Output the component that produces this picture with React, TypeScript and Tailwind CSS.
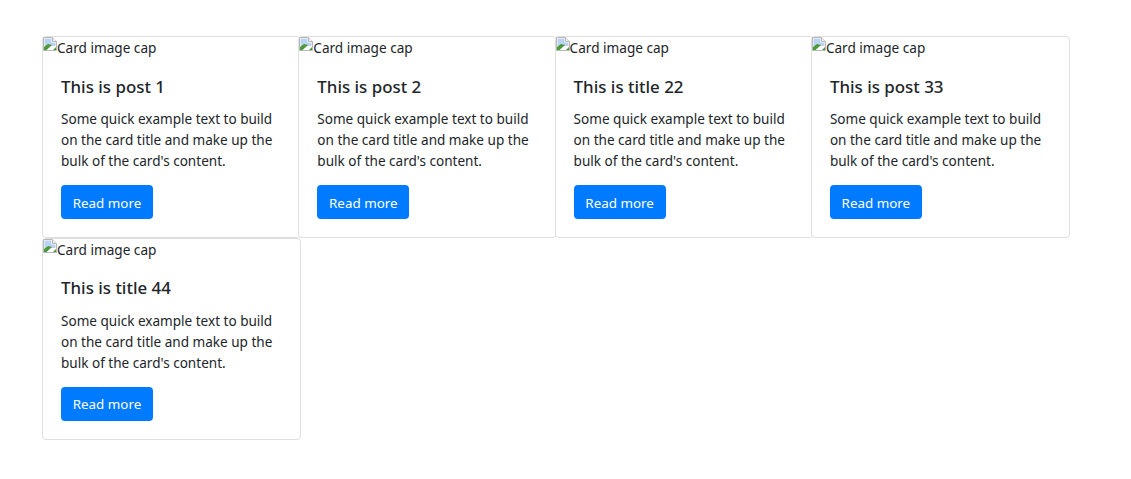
const posts = ["This is post 1", "This is post 2", "This is title 22", "This is post 33", "This is title 44"];

function BrokenImage() {
  return (
    <svg width="14" height="14" viewBox="0 0 14 14" className="shrink-0">
      <path d="M0.5 0.5H9.5L13.5 4.5V13.5H0.5Z" fill="#fff" stroke="#b8b8b8" />
      <path d="M9.5 0.5V4.5H13.5" fill="#f0f0f0" stroke="#b8b8b8" />
      <path d="M1.5 1.5H8.5V5.5H12.5V9H1.5Z" fill="#bcd2f2" />
      <path d="M1 13V10L5 7L9 8L3.5 13Z" fill="#4a9a3a" />
      <path d="M10 13L13 10V13Z" fill="#4a9a3a" />
    </svg>
  );
}

function Card({ title }: { title: string }) {
  return (
    <div className="w-[259px] h-[202px] bg-white border border-[#dfdfdf] rounded-[4px]">
      <div className="flex items-start h-[21px] text-[13.6px] leading-[22px] text-[#212529]">
        <BrokenImage />
        <span>Card image cap</span>
      </div>
      <div className="px-[18px] pt-[17.4px]">
        <h5 className="text-[16.9px] leading-[22px] font-medium text-[#212529] mb-[11.6px]">{title}</h5>
        <p className="text-[13.55px] leading-[21px] text-[#212529] mb-[13px]">
          Some quick example text to build on the card title and make up the bulk of the card's content.
        </p>
        <button className="block bg-[#007bff] text-white text-[13.4px] leading-[21px] rounded-[4px] w-[92px] h-[34px] pt-[2px]">
          Read more
        </button>
      </div>
    </div>
  );
}

export default function App() {
  return (
    <div className="bg-white min-h-[479px] pl-[42px] pt-[36.4px] font-['Noto_Sans','Open_Sans',sans-serif]">
      <div className="grid grid-cols-[repeat(4,256.3px)] auto-rows-[201.6px]">
        {posts.map((t) => (
          <Card key={t} title={t} />
        ))}
      </div>
    </div>
  );
}
